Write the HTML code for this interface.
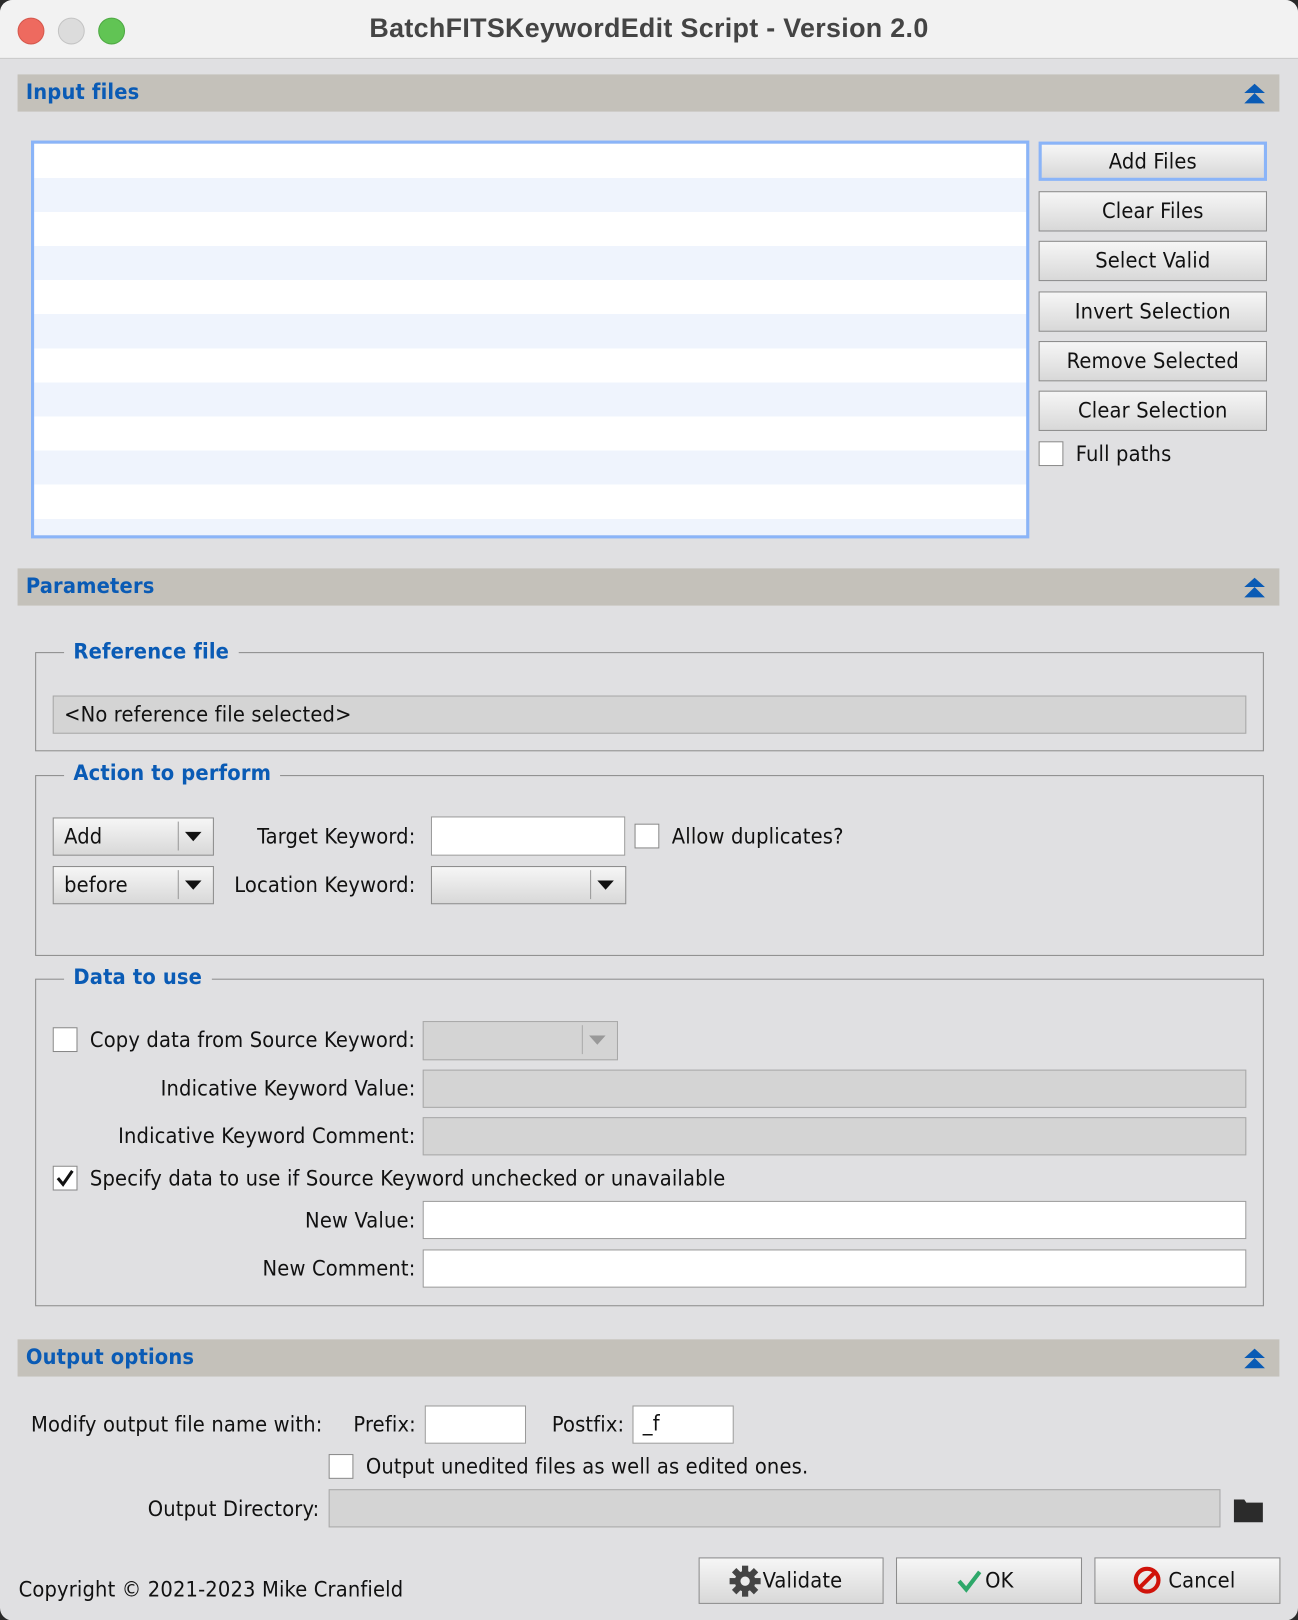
<!DOCTYPE html>
<html><head><meta charset="utf-8"><style>
html,body{margin:0;padding:0;width:1298px;height:1620px;overflow:hidden;background:#2a2a2a}
#w{position:absolute;left:0;top:0;width:1256px;height:1568px;transform:scale(1.03344);transform-origin:0 0;background:#e0e0e2;border-radius:12px;overflow:hidden;font-family:"DejaVu Sans Condensed","DejaVu Sans","Liberation Sans",sans-serif;font-size:21px;letter-spacing:0.15px;color:#111}
.a{position:absolute}
.tb{left:0;top:0;width:1256px;height:56px;background:#f2f2f2;border-bottom:1px solid #c9c9c9}
.tt{left:0;width:1256px;top:12px;text-align:center;font-family:"Liberation Sans",sans-serif;font-weight:bold;font-size:26px;color:#444;letter-spacing:0.3px}
.dot{top:17px;width:24px;height:24px;border-radius:50%}
.hd{left:17px;width:1221px;height:36px;background:#c4c1ba}
.hd span{position:absolute;left:8px;top:5px;font-weight:bold;color:#0a5bb5;font-size:21px}
.btn{border:1px solid #8c8c8c;background:linear-gradient(#f6f6f6,#d8d8d8);text-align:center;box-sizing:border-box;line-height:36px}
.fld{box-sizing:border-box;border:1px solid #9a9a9a;background:#fff}
.dis{background:#d4d4d4;border-color:#a8a8a8}
.grp{box-sizing:border-box;border:1px solid #8c8c8c}
.lg{background:#e0e0e2;padding:0 9px;font-weight:bold;color:#0a5bb5;font-size:21px}
.cb{box-sizing:border-box;width:24px;height:24px;border:1px solid #888;background:#fff}
.lbl{text-align:right}
.arr{width:0;height:0;border-left:8px solid transparent;border-right:8px solid transparent;border-top:9px solid #111}
</style></head><body><div id="w">
<div class="a tb"></div>
<div class="a dot" style="left:17px;background:#ee6a5f;border:1px solid #d5574c"></div>
<div class="a dot" style="left:56px;background:#dcdcdc;border:1px solid #c4c4c4"></div>
<div class="a dot" style="left:95px;background:#61c454;border:1px solid #4ea943"></div>
<div class="a tt">BatchFITSKeywordEdit Script - Version 2.0</div>

<div class="a hd" style="top:72px"><span>Input files</span></div>
<svg class="a" style="left:1203px;top:80px" width="22" height="22"><path d="M11 1L21 10H1Z M11 10L21 20H1Z" fill="#0a5bb5"/></svg>

<div class="a" style="left:30px;top:136px;width:966px;height:385px;box-sizing:border-box;border:3px solid #8ab4f8;background:repeating-linear-gradient(#fff 0 33px,#eff4fd 33px 66px)"></div>
<div class="a btn" style="left:1005px;top:137px;width:221px;height:38px;border:3px solid #8ab4f8;line-height:32px">Add Files</div>
<div class="a btn" style="left:1005px;top:185px;width:221px;height:39px">Clear Files</div>
<div class="a btn" style="left:1005px;top:233px;width:221px;height:39px">Select Valid</div>
<div class="a btn" style="left:1005px;top:282px;width:221px;height:39px">Invert Selection</div>
<div class="a btn" style="left:1005px;top:330px;width:221px;height:39px">Remove Selected</div>
<div class="a btn" style="left:1005px;top:378px;width:221px;height:39px">Clear Selection</div>
<div class="a cb" style="left:1005px;top:427px"></div>
<div class="a" style="left:1041px;top:427px">Full paths</div>

<div class="a hd" style="top:550px"><span>Parameters</span></div>
<svg class="a" style="left:1203px;top:558px" width="22" height="22"><path d="M11 1L21 10H1Z M11 10L21 20H1Z" fill="#0a5bb5"/></svg>

<div class="a grp" style="left:34px;top:631px;width:1189px;height:96px"></div>
<div class="a lg" style="left:62px;top:618px">Reference file</div>
<div class="a fld dis" style="left:51px;top:673px;width:1155px;height:37px;padding:5px 10px">&lt;No reference file selected&gt;</div>

<div class="a grp" style="left:34px;top:750px;width:1189px;height:175px"></div>
<div class="a lg" style="left:62px;top:736px">Action to perform</div>
<div class="a btn" style="left:51px;top:791px;width:156px;height:37px;text-align:left;padding-left:10px;line-height:35px">Add</div>
<div class="a" style="left:172px;top:795px;width:1px;height:28px;background:#999"></div>
<div class="a arr" style="left:179px;top:805px"></div>
<div class="a btn" style="left:51px;top:838px;width:156px;height:37px;text-align:left;padding-left:10px;line-height:35px">before</div>
<div class="a" style="left:172px;top:842px;width:1px;height:28px;background:#999"></div>
<div class="a arr" style="left:179px;top:852px"></div>
<div class="a lbl" style="left:200px;width:202px;top:797px">Target Keyword:</div>
<div class="a lbl" style="left:200px;width:202px;top:844px">Location Keyword:</div>
<div class="a fld" style="left:417px;top:790px;width:188px;height:38px"></div>
<div class="a cb" style="left:614px;top:797px"></div>
<div class="a" style="left:650px;top:797px">Allow duplicates?</div>
<div class="a btn" style="left:417px;top:838px;width:189px;height:37px"></div>
<div class="a" style="left:571px;top:842px;width:1px;height:28px;background:#999"></div>
<div class="a arr" style="left:578px;top:852px"></div>

<div class="a grp" style="left:34px;top:947px;width:1189px;height:317px"></div>
<div class="a lg" style="left:62px;top:933px">Data to use</div>
<div class="a cb" style="left:51px;top:994px"></div>
<div class="a" style="left:87px;top:994px">Copy data from Source Keyword:</div>
<div class="a fld dis" style="left:409px;top:988px;width:189px;height:38px"></div>
<div class="a" style="left:563px;top:992px;width:1px;height:28px;background:#aaa"></div>
<div class="a arr" style="left:570px;top:1002px;border-top-color:#999"></div>
<div class="a lbl" style="left:60px;width:342px;top:1041px">Indicative Keyword Value:</div>
<div class="a fld dis" style="left:409px;top:1035px;width:797px;height:37px"></div>
<div class="a lbl" style="left:60px;width:342px;top:1087px">Indicative Keyword Comment:</div>
<div class="a fld dis" style="left:409px;top:1081px;width:797px;height:37px"></div>
<div class="a cb" style="left:51px;top:1128px"></div>
<svg class="a" style="left:53px;top:1130px" width="20" height="20"><path d="M3 10L8 16L17 3" stroke="#111" stroke-width="3" fill="none"/></svg>
<div class="a" style="left:87px;top:1128px">Specify data to use if Source Keyword unchecked or unavailable</div>
<div class="a lbl" style="left:60px;width:342px;top:1169px">New Value:</div>
<div class="a fld" style="left:409px;top:1162px;width:797px;height:37px"></div>
<div class="a lbl" style="left:60px;width:342px;top:1215px">New Comment:</div>
<div class="a fld" style="left:409px;top:1209px;width:797px;height:37px"></div>

<div class="a hd" style="top:1296px"><span>Output options</span></div>
<svg class="a" style="left:1203px;top:1304px" width="22" height="22"><path d="M11 1L21 10H1Z M11 10L21 20H1Z" fill="#0a5bb5"/></svg>

<div class="a" style="left:30px;top:1366px">Modify output file name with:</div>
<div class="a" style="left:342px;top:1366px">Prefix:</div>
<div class="a fld" style="left:411px;top:1360px;width:98px;height:37px"></div>
<div class="a" style="left:534px;top:1366px">Postfix:</div>
<div class="a fld" style="left:612px;top:1360px;width:98px;height:37px;padding:4px 9px">_f</div>
<div class="a cb" style="left:318px;top:1407px"></div>
<div class="a" style="left:354px;top:1407px">Output unedited files as well as edited ones.</div>
<div class="a lbl" style="left:60px;width:249px;top:1448px">Output Directory:</div>
<div class="a fld dis" style="left:318px;top:1441px;width:863px;height:37px"></div>
<svg class="a" style="left:1193px;top:1448px" width="30" height="26"><path d="M1 3H11L13 6H29V25H1Z" fill="#2b2b2b"/></svg>

<div class="a" style="left:18px;top:1526px">Copyright © 2021-2023 Mike Cranfield</div>
<div class="a btn" style="left:676px;top:1507px;width:179px;height:45px;line-height:43px;padding-left:22px">Validate</div>
<svg class="a" style="left:705px;top:1514px" width="32" height="32" viewBox="0 0 32 32"><g fill="#444"><circle cx="16" cy="16" r="10"/><rect x="13" y="1" width="6" height="30"/><rect x="1" y="13" width="30" height="6"/><rect x="13" y="1" width="6" height="30" transform="rotate(45 16 16)"/><rect x="13" y="1" width="6" height="30" transform="rotate(-45 16 16)"/></g><circle cx="16" cy="16" r="4.5" fill="#ececec"/></svg>
<div class="a btn" style="left:867px;top:1507px;width:180px;height:45px;line-height:43px;padding-left:20px">OK</div>
<svg class="a" style="left:925px;top:1518px" width="26" height="24"><path d="M3 12L10 20L23 3" stroke="#2ea86a" stroke-width="4" fill="none"/></svg>
<div class="a btn" style="left:1059px;top:1507px;width:180px;height:45px;line-height:43px;padding-left:28px">Cancel</div>
<svg class="a" style="left:1096px;top:1515px" width="28" height="28"><circle cx="14" cy="14" r="11" stroke="#d0130a" stroke-width="4" fill="none"/><path d="M7 21L21 7" stroke="#d0130a" stroke-width="4"/></svg>
</div></body></html>
